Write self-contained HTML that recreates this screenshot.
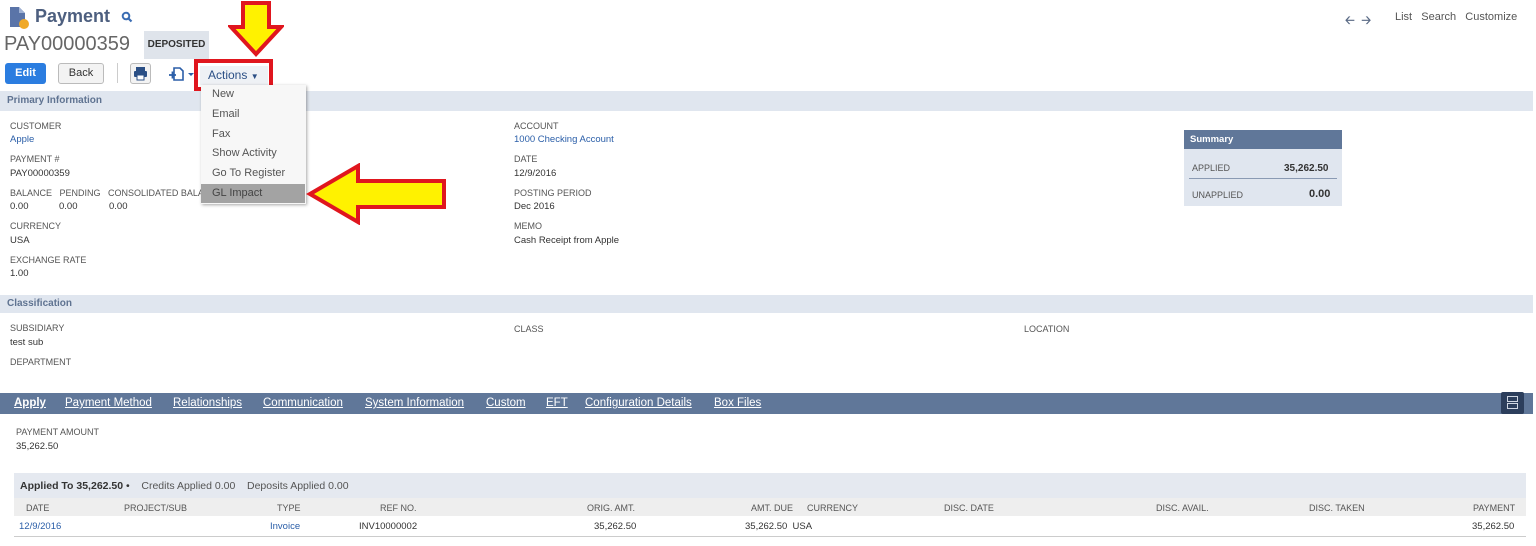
<!DOCTYPE html>
<html><head><meta charset="utf-8"><style>
*{margin:0;padding:0;box-sizing:border-box}
body{width:1536px;height:546px;background:#fff;font-family:"Liberation Sans",sans-serif;color:#333;position:relative;overflow:hidden}
.a{position:absolute;white-space:nowrap}
.l{font-size:9px;color:#555}
.v{font-size:9.5px;color:#333}
.lk{color:#2a5ea8}
.bar{position:absolute;left:0;width:1533px;background:#e0e6ef;font-size:10px;font-weight:bold;color:#5f7391;padding:4px 7px}
.tab{font-size:11.5px;color:#fff;text-decoration:underline}
.mi{position:absolute;left:201px;width:104px;height:19px;font-size:11px;color:#555;padding:3px 11px}
</style></head><body>
<!-- header -->
<svg class="a" style="left:8px;top:5px" width="22" height="24"><path d="M2 2h9l6 6v14H2z" fill="#5a74a8"/><path d="M11 2v6h6z" fill="#9fb1d4"/><circle cx="16" cy="19" r="5" fill="#f0a928"/></svg>
<div class="a" style="left:35px;top:6px;font-size:18px;font-weight:bold;color:#4d5f7f">Payment</div>
<svg class="a" style="left:121px;top:11px" width="12" height="12"><circle cx="5" cy="5" r="3.3" fill="none" stroke="#3b6db3" stroke-width="2"/><path d="M7.5 7.5l3 3" stroke="#3b6db3" stroke-width="2.2"/></svg>
<div class="a" style="left:4px;top:33px;font-size:20px;color:#666">PAY00000359</div>
<div class="a" style="left:144px;top:31px;width:65px;height:28px;background:#dfe4eb;font-size:10px;font-weight:bold;color:#333;text-align:center;line-height:28px">DEPOSITED</div>
<div class="a" style="left:1345px;top:11px;font-size:12px;color:#5a6a85;font-weight:bold">&#129120;&nbsp;&nbsp;&#129122;</div>
<div class="a" style="left:1395px;top:11px;font-size:11px;color:#555">List&nbsp;&nbsp;&nbsp;Search&nbsp;&nbsp;&nbsp;Customize</div>
<!-- buttons -->
<div class="a" style="left:5px;top:63px;width:41px;height:21px;background:#2b7de0;border-radius:3px;color:#fff;font-size:11px;font-weight:bold;text-align:center;line-height:21px">Edit</div>
<div class="a" style="left:58px;top:63px;width:46px;height:21px;background:#f3f3f3;border:1px solid #bbb;border-radius:3px;color:#333;font-size:11px;text-align:center;line-height:19px">Back</div>
<div class="a" style="left:117px;top:63px;width:1px;height:20px;background:#ccc"></div>
<div class="a" style="left:130px;top:63px;width:21px;height:21px;background:#f3f3f3;border:1px solid #bbb;border-radius:3px"></div>
<svg class="a" style="left:133px;top:66px" width="15" height="15"><rect x="3" y="1" width="9" height="4" fill="#2b4f85"/><rect x="1" y="5" width="13" height="6" rx="1" fill="#2b4f85"/><rect x="4" y="9" width="7" height="5" fill="#fff" stroke="#2b4f85"/></svg>
<svg class="a" style="left:168px;top:66px" width="28" height="16"><path d="M6 2h6l3 3v9H6z" fill="none" stroke="#2b5ea8" stroke-width="1.6"/><path d="M1 9h7M4.5 5.5v7" stroke="#2b5ea8" stroke-width="1.8"/><path d="M20 7l3 3 3-3z" fill="#2b5ea8"/></svg>
<div class="a" style="left:200px;top:66px;width:68px;height:19px;background:#eef1f5;font-size:12px;color:#2b4f85;padding:2px 8px">Actions <span style="font-size:8px">&#9660;</span></div>
<div class="a" style="left:194px;top:59px;width:79px;height:32px;border:4px solid #e0161e"></div>
<!-- primary bar -->
<div class="bar" style="top:91px;height:20px">Primary Information</div>
<!-- fields -->
<div class="a l" style="left:10px;top:121px">CUSTOMER</div><div class="a v lk" style="left:10px;top:134px">Apple</div>
<div class="a l" style="left:10px;top:154px">PAYMENT #</div><div class="a v" style="left:10px;top:168px">PAY00000359</div>
<div class="a l" style="left:10px;top:188px">BALANCE&nbsp;&nbsp;&nbsp;PENDING&nbsp;&nbsp;&nbsp;CONSOLIDATED BALANCE</div>
<div class="a v" style="left:10px;top:201px">0.00</div><div class="a v" style="left:59px;top:201px">0.00</div><div class="a v" style="left:109px;top:201px">0.00</div>
<div class="a l" style="left:10px;top:221px">CURRENCY</div><div class="a v" style="left:10px;top:235px">USA</div>
<div class="a l" style="left:10px;top:255px">EXCHANGE RATE</div><div class="a v" style="left:10px;top:268px">1.00</div>
<div class="a l" style="left:514px;top:121px">ACCOUNT</div><div class="a v lk" style="left:514px;top:134px">1000 Checking Account</div>
<div class="a l" style="left:514px;top:154px">DATE</div><div class="a v" style="left:514px;top:168px">12/9/2016</div>
<div class="a l" style="left:514px;top:188px">POSTING PERIOD</div><div class="a v" style="left:514px;top:201px">Dec 2016</div>
<div class="a l" style="left:514px;top:221px">MEMO</div><div class="a v" style="left:514px;top:235px">Cash Receipt from Apple</div>
<!-- summary -->
<div class="a" style="left:1184px;top:130px;width:158px;height:76px;background:#e0e6ef"></div>
<div class="a" style="left:1184px;top:130px;width:158px;height:19px;background:#607799;color:#fff;font-size:9.5px;font-weight:bold;padding:4px 6px">Summary</div>
<div class="a l" style="left:1192px;top:163px">APPLIED</div><div class="a" style="left:1284px;top:163px;font-size:10px;font-weight:bold">35,262.50</div>
<div class="a" style="left:1189px;top:178px;width:148px;height:1px;background:#8a9ab3"></div>
<div class="a l" style="left:1192px;top:190px">UNAPPLIED</div><div class="a" style="left:1309px;top:188px;font-size:11px;font-weight:bold">0.00</div>
<!-- classification -->
<div class="bar" style="top:295px;height:18px;padding-top:3px">Classification</div>
<div class="a l" style="left:10px;top:323px">SUBSIDIARY</div><div class="a v" style="left:10px;top:337px">test sub</div>
<div class="a l" style="left:10px;top:357px">DEPARTMENT</div>
<div class="a l" style="left:514px;top:324px">CLASS</div>
<div class="a l" style="left:1024px;top:324px">LOCATION</div>
<!-- tabs -->
<div class="a" style="left:0;top:393px;width:1533px;height:21px;background:#607799"></div>
<div class="a tab" style="left:14px;top:397px;font-weight:bold">Apply</div>
<div class="a tab" style="left:65px;top:397px">Payment Method</div>
<div class="a tab" style="left:173px;top:397px">Relationships</div>
<div class="a tab" style="left:263px;top:397px">Communication</div>
<div class="a tab" style="left:365px;top:397px">System Information</div>
<div class="a tab" style="left:486px;top:397px">Custom</div>
<div class="a tab" style="left:546px;top:397px">EFT</div>
<div class="a tab" style="left:585px;top:397px">Configuration Details</div>
<div class="a tab" style="left:714px;top:397px">Box Files</div>
<div class="a" style="left:1501px;top:392px;width:23px;height:22px;background:#2c3e5c;border-radius:2px"></div>
<div class="a" style="left:1507px;top:396px;width:11px;height:6px;border:1px solid #cfd6e2"></div>
<div class="a" style="left:1507px;top:403px;width:11px;height:6px;border:1px solid #cfd6e2"></div>
<div class="a l" style="left:16px;top:427px">PAYMENT AMOUNT</div><div class="a v" style="left:16px;top:441px">35,262.50</div>
<!-- subtab -->
<div class="a" style="left:14px;top:473px;width:1512px;height:25px;background:#e5e9f0"></div>
<div class="a" style="left:20px;top:480px;font-size:10.5px;color:#333"><b>Applied To 35,262.50</b> &#8226;&nbsp;&nbsp;&nbsp;&nbsp;<span style="color:#555">Credits Applied 0.00&nbsp;&nbsp;&nbsp;&nbsp;Deposits Applied 0.00</span></div>
<div class="a" style="left:14px;top:498px;width:1512px;height:18px;background:#eeeeee"></div>
<div class="a" style="left:14px;top:536px;width:1512px;height:1px;background:#ccc"></div>
<div class="a l" style="left:26px;top:503px">DATE</div>
<div class="a l" style="left:124px;top:503px">PROJECT/SUB</div>
<div class="a l" style="left:277px;top:503px">TYPE</div>
<div class="a l" style="left:380px;top:503px">REF NO.</div>
<div class="a l" style="left:587px;top:503px">ORIG. AMT.</div>
<div class="a l" style="left:751px;top:503px">AMT. DUE</div>
<div class="a l" style="left:807px;top:503px">CURRENCY</div>
<div class="a l" style="left:944px;top:503px">DISC. DATE</div>
<div class="a l" style="left:1156px;top:503px">DISC. AVAIL.</div>
<div class="a l" style="left:1309px;top:503px">DISC. TAKEN</div>
<div class="a l" style="left:1473px;top:503px">PAYMENT</div>
<div class="a v lk" style="left:19px;top:521px">12/9/2016</div>
<div class="a v lk" style="left:270px;top:521px">Invoice</div>
<div class="a v" style="left:359px;top:521px">INV10000002</div>
<div class="a v" style="left:594px;top:521px">35,262.50</div>
<div class="a v" style="left:745px;top:521px">35,262.50&nbsp;&nbsp;USA</div>
<div class="a v" style="left:1472px;top:521px">35,262.50</div>
<!-- dropdown -->
<div class="a" style="left:201px;top:85px;width:105px;height:119px;background:#f7f7f7;box-shadow:1px 1px 3px rgba(0,0,0,.35)"></div>
<div class="mi" style="top:85px">New</div>
<div class="mi" style="top:105px">Email</div>
<div class="mi" style="top:125px">Fax</div>
<div class="mi" style="top:144px">Show Activity</div>
<div class="mi" style="top:164px">Go To Register</div>
<div class="mi" style="top:184px;background:#a3a3a3;color:#444">GL Impact</div>
<!-- arrows -->
<svg class="a" style="left:228px;top:0" width="56" height="58"><path d="M15 3h26v24h12L28 54 3 27h12z" fill="#fff200" stroke="#e0161e" stroke-width="4" stroke-linejoin="miter"/></svg>
<svg class="a" style="left:306px;top:163px" width="142" height="62"><path d="M4 31L52 3v15h86v26H52v15z" fill="#fff200" stroke="#e0161e" stroke-width="4"/></svg>
</body></html>
